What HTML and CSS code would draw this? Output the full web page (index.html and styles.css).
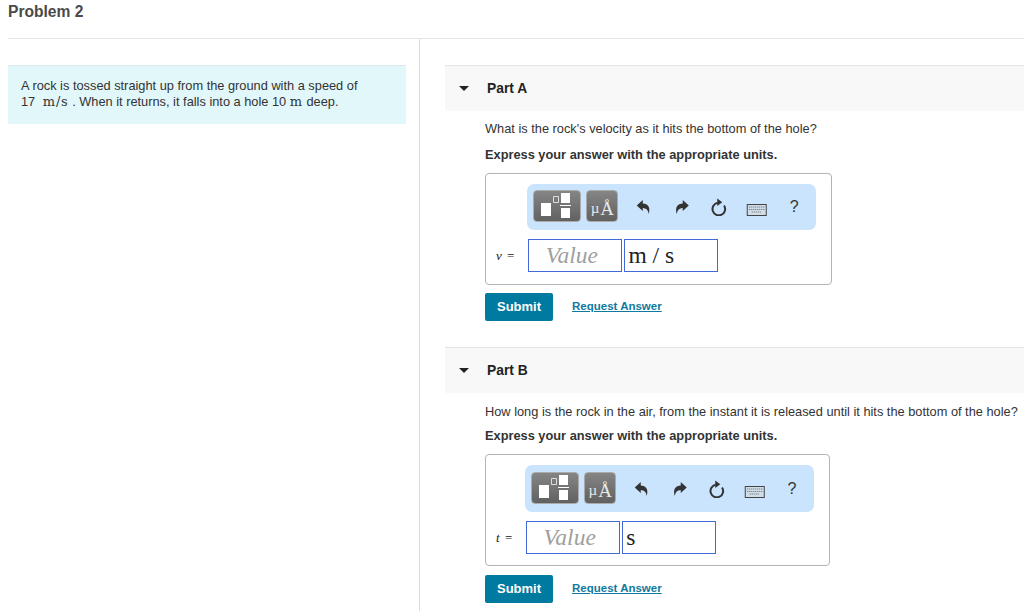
FILE: index.html
```html
<!DOCTYPE html>
<html lang="en">
<head>
<meta charset="utf-8">
<title>Problem 2</title>
<link rel="stylesheet" href="styles.css">
</head>
<body>
<h1 class="title">Problem 2</h1>
<div class="columns">
  <div class="left">
    <div class="intro">A rock is tossed straight up from the ground with a speed of<br><span class="num">17</span> <span class="unit">m/s</span> . When it returns, it falls into a hole 10 <span class="unit">m</span> deep.</div>
  </div>
  <div class="right">
    <section class="part">
      <div class="part-head">
        <svg class="caret" width="10" height="5" viewBox="0 0 10 5"><path d="M0 0H10L5 5Z"/></svg>
        <span>Part A</span>
      </div>
      <div class="part-body">
        <p class="question">What is the rock's velocity as it hits the bottom of the hole?</p>
        <p class="express">Express your answer with the appropriate units.</p>
        <div class="answer">
          <div class="toolbar">
            <span class="tool-btn tool-wide"><svg width="36" height="26" viewBox="0 0 36 26"><path class="w" d="M2 10H12V23H2ZM22 0H31V10H22ZM22 15H31V25H22ZM21 12H32V13H21Z"/><path class="o" d="M14.500 3.500H19.500V9.500H14.500Z"/></svg></span>
            <span class="tool-btn tool-mu"><span class="mu">µ</span>Å</span>
            <span class="tool-icons">
              <svg width="16" height="16" viewBox="0 0 16 16"><path class="k" d="M1 6.500 7 1V4.500C12 4.500 15 8 13 15 12.500 11 10.500 9 7 9V12Z"/></svg>
              <svg width="16" height="16" viewBox="0 0 16 16"><path class="k" d="M15 6.500 9 1V4.500C4 4.500 1 8 3 15 3.500 11 5.500 9 9 9V12Z"/></svg>
              <svg width="18" height="18" viewBox="0 0 18 18"><path class="ring" d="M8 4.800A6.300 6.300 0 1 0 14.300 7.500"/><path class="k" d="M7.500 0.500 12.500 4.300 7.500 8Z"/></svg>
              <svg class="kbd" width="20" height="12" viewBox="0 0 20 12"><rect class="kb" x="0.500" y="0.500" width="19" height="11"/><path class="kk" d="M2.500 3H17.500M2.500 5.500H17.500M5 8H15"/></svg>
              <span class="help">?</span>
            </span>
          </div>
          <span class="label"><i>v</i> =</span>
          <div class="fields">
            <span class="field value">Value</span>
            <span class="field units">m / s</span>
          </div>
        </div>
        <div class="actions">
          <span class="submit">Submit</span>
          <a class="request" href="#">Request Answer</a>
        </div>
      </div>
    </section>
    <section class="part part-b">
      <div class="part-head">
        <svg class="caret" width="10" height="5" viewBox="0 0 10 5"><path d="M0 0H10L5 5Z"/></svg>
        <span>Part B</span>
      </div>
      <div class="part-body">
        <p class="question">How long is the rock in the air, from the instant it is released until it hits the bottom of the hole?</p>
        <p class="express">Express your answer with the appropriate units.</p>
        <div class="answer">
          <div class="toolbar">
            <span class="tool-btn tool-wide"><svg width="36" height="26" viewBox="0 0 36 26"><path class="w" d="M2 10H12V23H2ZM22 0H31V10H22ZM22 15H31V25H22ZM21 12H32V13H21Z"/><path class="o" d="M14.500 3.500H19.500V9.500H14.500Z"/></svg></span>
            <span class="tool-btn tool-mu"><span class="mu">µ</span>Å</span>
            <span class="tool-icons">
              <svg width="16" height="16" viewBox="0 0 16 16"><path class="k" d="M1 6.500 7 1V4.500C12 4.500 15 8 13 15 12.500 11 10.500 9 7 9V12Z"/></svg>
              <svg width="16" height="16" viewBox="0 0 16 16"><path class="k" d="M15 6.500 9 1V4.500C4 4.500 1 8 3 15 3.500 11 5.500 9 9 9V12Z"/></svg>
              <svg width="18" height="18" viewBox="0 0 18 18"><path class="ring" d="M8 4.800A6.300 6.300 0 1 0 14.300 7.500"/><path class="k" d="M7.500 0.500 12.500 4.300 7.500 8Z"/></svg>
              <svg class="kbd" width="20" height="12" viewBox="0 0 20 12"><rect class="kb" x="0.500" y="0.500" width="19" height="11"/><path class="kk" d="M2.500 3H17.500M2.500 5.500H17.500M5 8H15"/></svg>
              <span class="help">?</span>
            </span>
          </div>
          <span class="label"><i>t</i> =</span>
          <div class="fields">
            <span class="field value">Value</span>
            <span class="field units">s</span>
          </div>
        </div>
        <div class="actions">
          <span class="submit">Submit</span>
          <a class="request" href="#">Request Answer</a>
        </div>
      </div>
    </section>
  </div>
</div>
</body>
</html>
```
FILE: styles.css
```css
html, body { margin: 0; padding: 0; height: 611px; overflow: hidden; background: #fff; }
body { font-family: "Liberation Sans", Arial, sans-serif; font-size: 12.800px; color: #333; }
.title { margin: 0 0 0 8px; height: 38px; box-sizing: border-box; padding-top: 3px; font-size: 15.600px; line-height: 18px; font-weight: bold; color: #4a4a4a; }
.columns { display: flex; margin-left: 8px; border-top: 1px solid #e4e4e4; height: 572px; }
.left { width: 411px; box-sizing: border-box; padding: 26px 13px 0 0; }
.intro { background: #e2f7fa; border-top: 1px solid #dde6e8; height: 59px; box-sizing: border-box; padding: 12px 12px 0 13px; line-height: 15.500px; }
.num { margin-right: 4px; }
.unit { font-family: "DejaVu Serif", serif; font-size: 13px; letter-spacing: 0.800px; }
.right { flex: 1; border-left: 1px solid #d8dde2; padding: 26px 0 0 25px; min-width: 0; }
.part-head { display: flex; align-items: center; height: 46px; box-sizing: border-box; background: #f8f8f8; border-top: 1px solid #e4e4e4; padding-left: 14px; font-weight: bold; font-size: 13.800px; color: #222; }
.caret { fill: #222; margin-right: 18px; }
.part-body { padding-left: 40px; }
.question { margin: 0; padding-top: 10px; line-height: 15px; white-space: nowrap; }
.part-b .question { padding-top: 11px; }
.express { margin: 0; padding-top: 11px; line-height: 15px; font-weight: bold; }
.part-b .express { padding-top: 9px; }
.answer { display: inline-grid; grid-template-columns: auto auto; margin-top: 11px; border: 1px solid #b3b3b3; border-radius: 4px; padding: 10px 15px 12px 10px; vertical-align: top; }
.part-b .answer { padding-bottom: 11px; }
.toolbar { grid-column: 2; display: flex; align-items: center; box-sizing: border-box; background: #c9e4fc; border-radius: 7px; height: 46px; margin-left: -1px; padding: 0 0 2px 6px; width: 289px; }
.part-b .toolbar { height: 47px; }
.tool-btn { display: flex; align-items: center; justify-content: center; height: 32px; box-sizing: border-box; border-radius: 4px; background: linear-gradient(#858585, #616161); border: 1px solid #aaa; color: #e8e8e8; flex: none; }
.tool-wide { width: 48px; margin-right: 5px; }
.tool-mu { width: 32px; font-family: "Liberation Serif", serif; font-size: 19px; line-height: 1; padding-top: 5px; }
.mu { font-size: 15px; margin-right: 1px; }
.w { fill: #fff; }
.o { fill: none; stroke: #ddd; stroke-width: 1; }
.tool-icons { display: flex; align-items: center; margin: 2px 0 0 7px; }
.tool-icons svg, .help { display: block; flex: none; width: 37.500px; }
.tool-icons .kbd { margin-top: 6px; }
.k { fill: #333; }
.ring { fill: none; stroke: #333; stroke-width: 2; }
.kb { fill: #cfdde8; stroke: #444; }
.kk { fill: none; stroke: #666; stroke-width: 1; stroke-dasharray: 1 1; }
.help { text-align: center; font-size: 16px; line-height: 18px; color: #333; }
.label { grid-column: 1; grid-row: 2; align-self: center; padding-top: 9px; font-family: "Liberation Serif", serif; font-size: 13px; word-spacing: 2px; color: #222; margin-right: 14px; white-space: nowrap; }
.fields { grid-column: 2; grid-row: 2; display: flex; margin-top: 9px; }
.field { display: block; box-sizing: border-box; width: 94px; height: 33px; border: 1px solid #4169d8; font-family: "Liberation Serif", serif; font-size: 23.500px; line-height: 31px; }
.value { font-style: italic; color: #9f9f9f; text-align: center; margin-right: 2px; padding-right: 7px; }
.units { color: #222; padding-left: 3px; }
.actions { display: flex; align-items: center; margin-top: 8px; height: 28px; margin-bottom: 26px; }
.part-b .actions { margin-top: 9px; }
.submit { display: block; width: 68px; height: 28px; line-height: 28px; text-align: center; background: #007a9e; color: #fff; border-radius: 2px; font-weight: bold; font-size: 13px; }
.request { margin: 0 0 2px 19px; color: #0f7aa0; font-weight: bold; font-size: 11.500px; text-decoration: underline; }
```
